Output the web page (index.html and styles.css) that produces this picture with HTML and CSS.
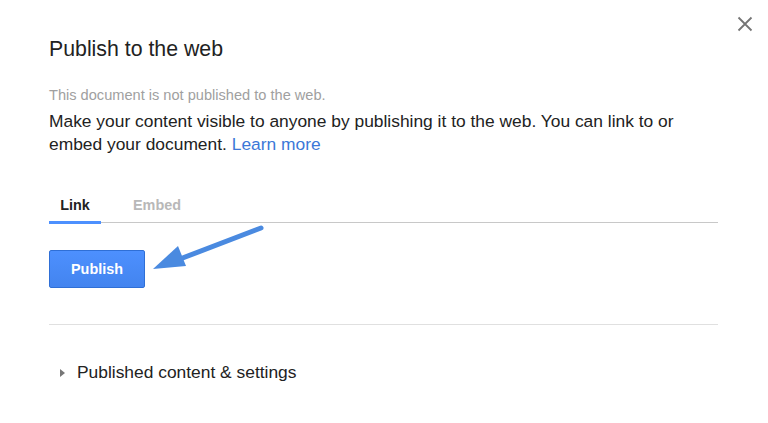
FILE: index.html
```html
<!DOCTYPE html>
<html>
<head>
<meta charset="utf-8">
<link rel="stylesheet" href="styles.css">
</head>
<body>
<div class="dialog">
  <button class="close" aria-label="Close">
    <svg width="16" height="16" viewBox="0 0 16 16"><path d="M1.5 1.5L14.5 14.5M14.5 1.5L1.5 14.5" stroke="#757575" stroke-width="1.8" fill="none"/></svg>
  </button>
  <h1 class="title">Publish to the web</h1>
  <p class="status">This document is not published to the web.</p>
  <p class="desc">Make your content visible to anyone by publishing it to the web. You can link to or embed your document. <a class="learn" href="#">Learn more</a></p>
  <div class="tabs">
    <div class="tab active">Link</div>
    <div class="tab">Embed</div>
  </div>
  <div class="action">
    <button class="publish">Publish</button>
    <svg class="arrow" width="120" height="50" viewBox="0 0 120 50">
      <path d="M111 4 L30 35" stroke="#4a8ae0" stroke-width="5" stroke-linecap="round" fill="none"/>
      <path d="M3 45 L28 22 L36 42 Z" fill="#4a8ae0"/>
    </svg>
  </div>
  <hr class="sep">
  <div class="settings">
    <span class="tri"></span>
    <span>Published content &amp; settings</span>
  </div>
</div>
</body>
</html>
```
FILE: styles.css
```css
html, body {
  margin: 0;
  padding: 0;
  background: #fff;
}
body {
  font-family: "Liberation Sans", Arial, sans-serif;
  color: #222;
}
.dialog {
  position: relative;
  padding: 36px 50px 0 49px;
}
.close {
  position: absolute;
  top: 16px;
  right: 15px;
  background: none;
  border: 0;
  padding: 0;
  width: 16px;
  height: 16px;
}
.title {
  margin: 0;
  font-size: 21.3px;
  font-weight: normal;
  line-height: 26px;
  color: #222;
}
.status {
  margin: 25px 0 0;
  font-size: 14.6px;
  line-height: 17px;
  color: #a0a0a0;
}
.desc {
  margin: 6px 0 0;
  font-size: 17.4px;
  line-height: 23px;
  color: #222;
}
.learn {
  color: #3c78d8;
  text-decoration: none;
}
.tabs {
  display: flex;
  margin-top: 38px;
  border-bottom: 1px solid #c8c8c8;
  height: 28px;
}
.tab {
  font-size: 14.4px;
  font-weight: bold;
  color: #b8b8b8;
  padding: 3px 0 0;
  width: 52px;
  text-align: center;
  margin-right: 30px;
  box-sizing: border-box;
}
.tab.active {
  color: #222;
  border-bottom: 3px solid #4d90fe;
  margin-bottom: -2px;
}
.action {
  position: relative;
  margin-top: 27px;
  height: 38px;
}
.publish {
  width: 96px;
  height: 38px;
  border: 1px solid #2f6fd6;
  border-radius: 2px;
  background: linear-gradient(#4d90fe, #4384ef);
  color: #fff;
  font-family: "Liberation Sans", Arial, sans-serif;
  font-size: 14.4px;
  font-weight: bold;
  padding: 0;
}
.arrow {
  position: absolute;
  left: 101px;
  top: -26px;
}
.sep {
  margin: 36px 0 0;
  border: 0;
  border-top: 1px solid #e0e0e0;
}
.settings {
  display: flex;
  align-items: center;
  margin-top: 37px;
  font-size: 17.4px;
  color: #222;
}
.tri {
  width: 0;
  height: 0;
  border-top: 4px solid transparent;
  border-bottom: 4px solid transparent;
  border-left: 5px solid #777;
  margin: 0 12px 0 11px;
}
```
